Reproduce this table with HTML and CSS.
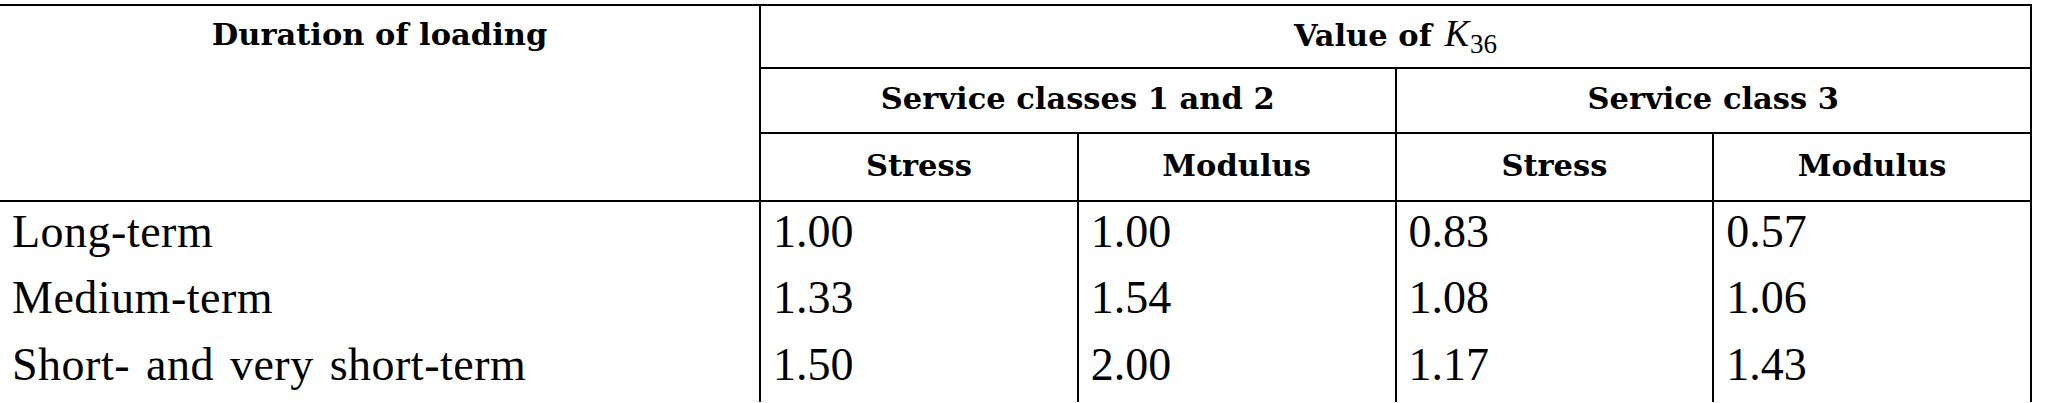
FILE: index.html
```html
<!DOCTYPE html>
<html lang="en">
<head>
<meta charset="utf-8">
<title>Values of K36</title>
<link rel="stylesheet" href="styles.css">
</head>
<body>
<div class="page">
<table class="ktable">
  <colgroup>
    <col class="c-dur">
    <col class="c-val">
    <col class="c-val">
    <col class="c-val">
    <col class="c-val">
  </colgroup>
  <thead>
    <tr class="h1">
      <th rowspan="3" class="dur">Duration of loading</th>
      <th colspan="4">Value of <span class="math"><i>K</i><sub>36</sub></span></th>
    </tr>
    <tr class="h2">
      <th colspan="2">Service classes 1 and 2</th>
      <th colspan="2">Service class 3</th>
    </tr>
    <tr class="h3">
      <th>Stress</th>
      <th>Modulus</th>
      <th>Stress</th>
      <th>Modulus</th>
    </tr>
  </thead>
  <tbody>
    <tr>
      <td class="label">Long-term</td>
      <td>1.00</td>
      <td>1.00</td>
      <td>0.83</td>
      <td>0.57</td>
    </tr>
    <tr>
      <td class="label">Medium-term</td>
      <td>1.33</td>
      <td>1.54</td>
      <td>1.08</td>
      <td>1.06</td>
    </tr>
    <tr>
      <td class="label">Short- and very short-term</td>
      <td>1.50</td>
      <td>2.00</td>
      <td>1.17</td>
      <td>1.43</td>
    </tr>
  </tbody>
</table>
</div>
</body>
</html>
```
FILE: styles.css
```css
html, body {
  margin: 0;
  padding: 0;
  background: #ffffff;
}

body {
  overflow: hidden;
}

.page {
  padding-top: 4px;
}

.ktable {
  border-collapse: collapse;
  table-layout: fixed;
  width: 2031px;
  color: #000000;
}

.c-dur { width: 760px; }
.c-val { width: 317.75px; }

.ktable th {
  font-family: "DejaVu Serif", serif;
  font-weight: bold;
  font-size: 30.5px;
  line-height: 36px;
  text-align: center;
  vertical-align: top;
  border: 2px solid #000000;
  padding: 0;
  box-sizing: border-box;
}

.ktable tr.h1 th {
  height: 63px;
  padding-top: 10px;
}

.ktable tr.h1 th.dur {
  border-left: none;
}

.ktable tr.h2 th {
  height: 65px;
  padding-top: 11px;
}

.ktable tr.h3 th {
  height: 68px;
  padding-top: 13px;
}

.math {
  font-family: "Liberation Serif", serif;
  font-weight: normal;
  margin-left: 2px;
}

.math i {
  font-size: 37px;
}

.math sub {
  font-size: 27px;
  vertical-align: -7px;
  line-height: 0;
  margin-left: 1px;
}

.ktable td {
  font-family: "Liberation Serif", serif;
  font-size: 46px;
  line-height: 60px;
  height: 67px;
  padding: 0 0 0 12px;
  vertical-align: top;
  border-left: 2px solid #000000;
  border-right: 2px solid #000000;
  box-sizing: border-box;
  white-space: nowrap;
}

.ktable td.label {
  border-left: none;
  letter-spacing: 0.5px;
  word-spacing: 4px;
}
```
